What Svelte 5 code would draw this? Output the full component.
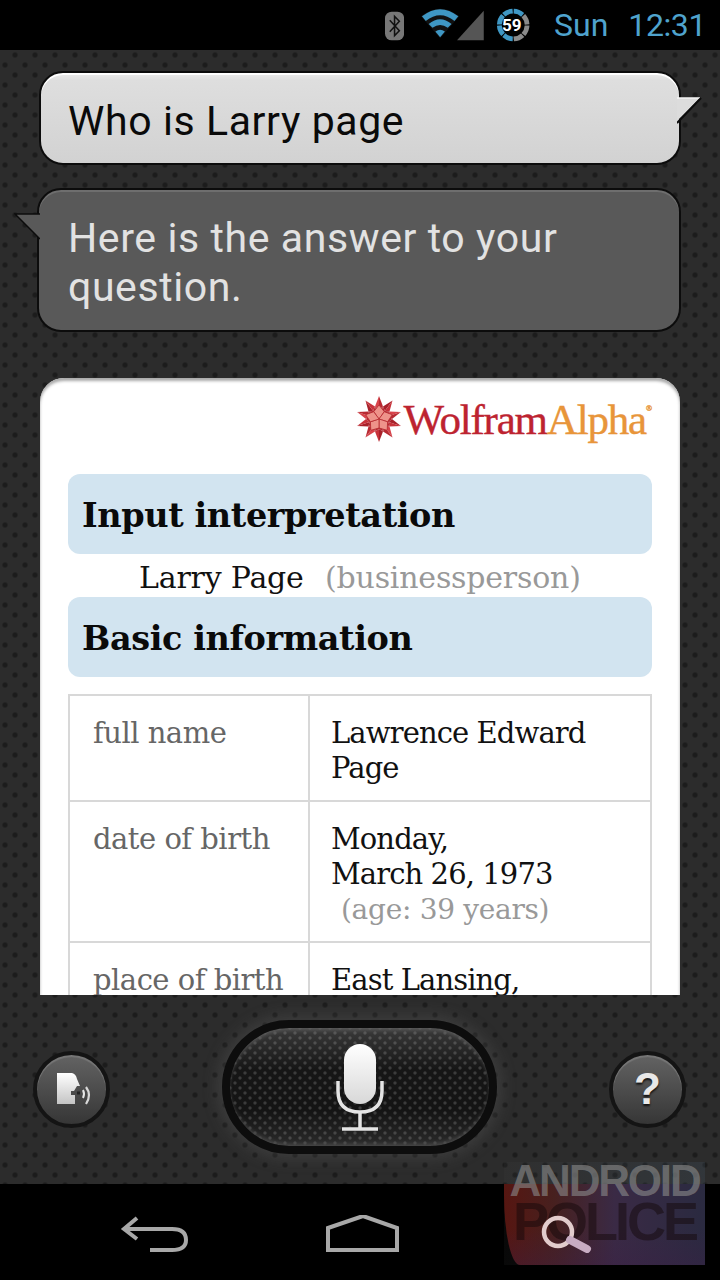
<script>
  const rows = [
    { label: "full name", lines: ["Lawrence Edward", "Page"] },
    { label: "date of birth", lines: ["Monday,", "March 26, 1973"], note: "(age: 39 years)" },
    { label: "place of birth", lines: ["East Lansing,", "Michigan"] },
  ];
  const segs = [0, 45, 90, 135, 180, 225, 270, 315];

  // wolfram star: ten spikes round a pale centre
  const cx = 23;
  const cy = 23;
  const pt = (r, i) => {
    const a = ((i * 36 - 90) * Math.PI) / 180;
    return `${(cx + r * Math.cos(a)).toFixed(1)},${(cy + r * Math.sin(a)).toFixed(1)}`;
  };
  const spikes = Array.from({ length: 10 }, (_, i) => ({
    left: `${pt(13, i - 0.5)} ${pt(23, i)} ${pt(10, i)}`,
    right: `${pt(13, i + 0.5)} ${pt(23, i)} ${pt(10, i)}`,
    base: `${pt(13, i - 0.5)} ${pt(10, i)} ${pt(13, i + 0.5)} ${pt(4, i + 0.5)} ${pt(4, i - 0.5)}`,
    i,
  }));
  const kites = [0, 2, 4, 6, 8].map((i) => `${pt(0, i)} ${pt(9, i - 1)} ${pt(14, i)} ${pt(9, i + 1)}`);
</script>

<div class="screen">
  <header class="status">
    <svg class="bt" width="20" height="30" viewBox="0 0 20 30">
      <rect x="0" y="0" width="20" height="30" rx="7" fill="#777" />
      <path d="M5 9 L15 20 L10 25 V5 L15 10 L5 21" fill="none" stroke="#111" stroke-width="1.6" />
    </svg>
    <svg class="wifi" width="40" height="32" viewBox="0 0 40 32">
      <path d="M0 9 Q20 -7 40 9 L20 32 Z" fill="#111" />
      <path d="M1 9 Q20 -6 39 9 L35 14 Q20 2 5 14 Z" fill="#3f97c4" />
      <path d="M8 17 Q20 7 32 17 L28 21 Q20 15 12 21 Z" fill="#3f97c4" />
      <path d="M15 25 Q20 21 25 25 L20 31 Z" fill="#3f97c4" />
    </svg>
    <svg class="signal" width="28" height="31" viewBox="0 0 28 31">
      <path d="M28 0 V31 H0 Z" fill="#555" />
    </svg>
    <svg class="batt" width="36" height="36" viewBox="0 0 36 36">
      {#each segs as a, i}
        <path
          d="M18 1 A17 17 0 0 1 29 5 L26 9 A12 12 0 0 0 18 6 Z"
          fill={i === 1 || i === 2 || i === 3 ? "#8a8a8a" : "#3f97c4"}
          transform="rotate({a + 2} 18 18)"
        />
      {/each}
    </svg>
    <span class="batt-num">59</span>
    <span class="clock">Sun</span>
    <span class="clock time">12:31</span>
  </header>

  <main class="main">
    <div class="convo">
      <div class="bubble me">
        <svg class="tail tail-r" width="26" height="30" viewBox="0 0 26 30">
          <path d="M0 2 H23 L0 25 Z" fill="#dcdcdc" />
          <path d="M0 2 H23" stroke="#f4f4f4" stroke-width="1.5" />
          <path d="M0 27 L24 2" stroke="#0c0c0c" stroke-width="2" />
        </svg>
        Who is Larry page
      </div>
      <div class="bubble bot">
        <svg class="tail tail-l" width="26" height="30" viewBox="0 0 26 30">
          <path d="M26 1 H1 L26 26 Z" fill="#595959" />
          <path d="M26 1 H1 L26 26" fill="none" stroke="#0c0c0c" stroke-width="1.5" />
        </svg>
        Here is the answer to your question.
      </div>

      <section class="card">
        <div class="logo">
          <svg width="46" height="46" viewBox="0 0 46 46">
            {#each spikes as s}
              <polygon points={s.left} fill={s.i % 2 ? "#a8212a" : "#d8434a"} />
              <polygon points={s.right} fill={s.i % 2 ? "#c8323a" : "#b82a32"} />
              <polygon points={s.base} fill="#b5282f" />
            {/each}
            {#each kites as k}
              <polygon points={k} fill="#ee938a" stroke="#b5282f" stroke-width="0.8" />
            {/each}
          </svg>
          <span class="wolf">Wolfram</span><span class="alpha">Alpha</span><sup class="reg">®</sup>
        </div>

        <h2 class="pod">Input interpretation</h2>
        <p class="interp">Larry Page <span class="grey">(businessperson)</span></p>
        <h2 class="pod">Basic information</h2>

        <div class="table">
          {#each rows as row}
            <div class="cell key">{row.label}</div>
            <div class="cell val">
              {#each row.lines as line}
                <div>{line}</div>
              {/each}
              {#if row.note}
                <div class="note">{row.note}</div>
              {/if}
            </div>
          {/each}
        </div>
      </section>
    </div>

    <div class="controls">
      <button class="round" aria-label="speak">
        <svg width="44" height="36" viewBox="0 0 44 36">
          <defs>
            <linearGradient id="head" x1="0" y1="0" x2="0" y2="1">
              <stop offset="0" stop-color="#fff" />
              <stop offset="1" stop-color="#c4c4c4" />
            </linearGradient>
          </defs>
          <path d="M7 2 H22 Q26 3 27 8 L30 15 H27 L24 20 H21 V24 H25 V33 H7 Z" fill="url(#head)" />
          <path d="M30 22 H27" stroke="#222" stroke-width="3" />
          <path d="M33 19 Q35 23 33 27" fill="none" stroke="#e8e8e8" stroke-width="2" />
          <path d="M36 16 Q42 24 36 33" fill="none" stroke="#d8d8d8" stroke-width="2.2" />
        </svg>
      </button>

      <button class="pill" aria-label="microphone">
        <svg width="52" height="88" viewBox="0 0 52 88">
          <defs>
            <linearGradient id="micg" x1="0" y1="0" x2="0" y2="1">
              <stop offset="0" stop-color="#fff" />
              <stop offset="1" stop-color="#d8d8d8" />
            </linearGradient>
          </defs>
          <rect x="10" y="1" width="32" height="60" rx="16" fill="url(#micg)" />
          <path d="M4 38 V48 Q4 69 26 69 Q48 69 48 48 V38" fill="none" stroke="#e4e4e4" stroke-width="3.5" />
          <path d="M26 69 V85 M8 86 H44" fill="none" stroke="#e4e4e4" stroke-width="3.5" />
        </svg>
      </button>

      <button class="round help">?</button>
    </div>
  </main>

  <nav class="nav">
    <svg width="70" height="38" viewBox="0 0 70 38">
      <path d="M17 3 L4 14 L17 24 M4 14 H52 Q66 14 66 25 Q66 35 52 35 H30" fill="none" stroke="#a8a8a8" stroke-width="4" />
    </svg>
    <svg width="74" height="38" viewBox="0 0 74 38">
      <path d="M2 13 L37 1 L71 13 V35 H2 Z" fill="none" stroke="#a8a8a8" stroke-width="4" />
    </svg>
    <svg width="54" height="38" viewBox="0 0 54 38">
      <circle cx="17" cy="17" r="14" fill="none" stroke="#e2cccc" stroke-width="4.5" />
      <path d="M29 25 L46 34" stroke="#c8acc2" stroke-width="8" stroke-linecap="round" />
    </svg>
  </nav>

  <div class="mark" aria-hidden="true">
    <span>ANDROID</span>
    <span>POLICE</span>
  </div>
</div>

<style>
  :global(body) {
    margin: 0;
    background: #000;
  }

  .screen {
    position: relative;
    width: 720px;
    height: 1280px;
    display: flex;
    flex-direction: column;
    overflow: hidden;
    font-family: Roboto, sans-serif;
  }

  .status {
    flex: 0 0 50px;
    background: #000;
    display: flex;
    align-items: center;
    padding: 0 14px 0 385px;
    box-sizing: border-box;
    color: #4fa3cd;
  }

  .bt {
    margin: 1px 0 0;
  }

  .wifi {
    margin: -4px 0 0 17px;
  }

  .signal {
    margin: 0 0 0 -2px;
  }

  .batt {
    margin: 0 0 0 12px;
  }

  .batt-num {
    width: 36px;
    margin-left: -36px;
    text-align: center;
    color: #fff;
    font-size: 17px;
    font-weight: 700;
  }

  .clock {
    font-size: 32px;
    margin-left: 25px;
    line-height: 50px;
  }

  .clock.time {
    margin-left: 20px;
    letter-spacing: -0.4px;
  }

  .main {
    flex: 1;
    display: flex;
    flex-direction: column;
    background-color: #2c2c2c;
    background-image:
      radial-gradient(circle at center, #1c1c1c 0, #1c1c1c 1.8px, transparent 3.4px),
      radial-gradient(circle at center, #1c1c1c 0, #1c1c1c 1.8px, transparent 3.4px);
    background-size: 20px 20px;
    background-position: -5px 5px, 5px -5px;
  }

  .convo {
    height: 945px;
    overflow: hidden;
    box-sizing: border-box;
    padding: 21px 39px 0 39px;
  }

  .bubble {
    position: relative;
    border: 2px solid #0c0c0c;
    border-radius: 24px;
    box-sizing: border-box;
    font-size: 41px;
    letter-spacing: 0.6px;
    line-height: 49px;
    padding: 0 27px;
  }

  .me {
    height: 94px;
    padding-top: 24px;
    background: linear-gradient(#ececec 0, #dedede 8%, #d2d2d2 100%);
    box-shadow: inset 0 2px 0 #fff;
    color: #0a0a0a;
  }

  .bot {
    margin: 23px 0 0 -2px;
    height: 144px;
    padding: 24px 60px 0 29px;
    background: #595959;
    box-shadow: inset 0 2px 0 #6e6e6e;
    color: #e2e2e2;
  }

  .tail {
    position: absolute;
  }

  .tail-r {
    right: -24px;
    top: 23px;
  }

  .tail-l {
    left: -25px;
    top: 23px;
  }

  .card {
    margin: 46px 0 0 1px;
    width: 640px;
    height: 640px;
    box-sizing: border-box;
    background: #fff;
    border-radius: 24px 24px 0 0;
    box-shadow: inset 0 3px 3px #aaa;
    padding: 16px 28px 0 28px;
    font-family: "DejaVu Serif", serif;
  }

  .logo {
    height: 80px;
    box-sizing: border-box;
    display: flex;
    align-items: flex-start;
    justify-content: flex-end;
    font-family: "Liberation Serif", serif;
    font-size: 43px;
    line-height: 52px;
    letter-spacing: -1.2px;
    -webkit-text-stroke: 0.4px currentColor;
  }

  .logo svg {
    margin: 2px 1px 0 0;
  }

  .wolf {
    color: #bd2330;
  }

  .alpha {
    color: #e8953a;
  }

  .reg {
    color: #e8953a;
    font-size: 8px;
    line-height: 30px;
    letter-spacing: 0;
  }

  .pod {
    margin: 0;
    height: 80px;
    background: #d2e4f0;
    border-radius: 12px;
    padding-left: 14px;
    font-size: 33.5px;
    font-weight: 700;
    line-height: 84px;
    color: #0a0a0a;
    letter-spacing: -0.4px;
  }

  .interp {
    margin: 0;
    height: 43px;
    line-height: 47px;
    padding-left: 71px;
    font-size: 30px;
    letter-spacing: -0.2px;
    color: #111;
  }

  .grey {
    margin-left: 12px;
    color: #999;
  }

  .table {
    margin-top: 17px;
    display: grid;
    grid-template-columns: 240px 342px;
    border-top: 2px solid #d8d8d8;
    border-left: 2px solid #d8d8d8;
    font-size: 29px;
    line-height: 35px;
    letter-spacing: -0.5px;
    box-sizing: border-box;
    width: 584px;
  }

  .cell {
    border-right: 2px solid #d8d8d8;
    border-bottom: 2px solid #d8d8d8;
    padding: 20px 10px 14px 23px;
    box-sizing: border-box;
  }

  .key {
    color: #666;
  }

  .val {
    color: #111;
    padding-left: 21px;
    letter-spacing: -0.9px;
  }

  .note {
    color: #999;
    padding-left: 10px;
    font-size: 28px;
    letter-spacing: -0.3px;
  }

  .controls {
    flex: 1;
    position: relative;
    display: flex;
    align-items: center;
    justify-content: space-between;
    padding: 0 34px 0 33px;
    box-sizing: border-box;
  }

  button {
    padding: 0;
    display: flex;
    align-items: center;
    justify-content: center;
    cursor: pointer;
  }

  .round {
    width: 77px;
    height: 77px;
    border-radius: 50%;
    border: 4px solid #141414;
    box-sizing: border-box;
    background: linear-gradient(#636363, #363636);
    box-shadow: inset 0 2px 1px #777;
    margin-top: -1px;
  }

  .help {
    color: #e8e8e8;
    font-family: "Liberation Sans", sans-serif;
    font-size: 44px;
    font-weight: 700;
    text-shadow: 0 2px 2px #111;
  }

  .pill {
    width: 275px;
    height: 134px;
    border-radius: 67px;
    border: 8px solid #0d0d0d;
    box-sizing: border-box;
    background-color: #1a1a1a;
    background-image:
      radial-gradient(circle at center, rgba(255, 255, 255, 0.2) 0, rgba(255, 255, 255, 0.14) 1.2px, transparent 2.2px),
      radial-gradient(circle at center, rgba(255, 255, 255, 0.2) 0, rgba(255, 255, 255, 0.14) 1.2px, transparent 2.2px),
      linear-gradient(#3a3a3a, #161616 35%, #141414 70%, #2a2a2a);
    background-size: 10px 10px, 10px 10px, 100% 100%;
    background-position: 0 0, 5px 5px, 0 0;
    box-shadow:
      0 0 16px 4px rgba(110, 110, 110, 0.28),
      inset 0 4px 4px -2px #5c5c5c,
      inset 0 -4px 4px -2px #4a4a4a;
    margin-bottom: 5px;
  }

  .nav {
    flex: 0 0 96px;
    background: #000;
    display: flex;
    align-items: flex-start;
    padding: 31px 0 0 120px;
    box-sizing: border-box;
    gap: 136px;
  }

  .nav svg:last-child {
    position: relative;
    z-index: 2;
    margin-left: 5px;
  }

  .mark {
    position: absolute;
    left: 504px;
    top: 1162px;
    width: 201px;
    height: 103px;
    display: flex;
    flex-direction: column;
    align-items: center;
    font-family: "Liberation Sans", sans-serif;
    font-weight: 700;
    z-index: 1;
    background: linear-gradient(90deg, rgba(70, 70, 70, 0.12), rgba(70, 90, 110, 0.22));
  }

  .mark::before {
    content: "";
    position: absolute;
    inset: 22px 0 0 0;
    background:
      linear-gradient(rgba(0, 0, 0, 0) 55%, rgba(60, 30, 70, 0.35)),
      linear-gradient(90deg, #561611 0, #47201f 25%, #3a2a45 55%, #2a2a40 100%);
    border-bottom-left-radius: 16px 70px;
  }

  .mark span {
    position: relative;
    font-size: 44px;
    height: 37px;
    line-height: 38px;
    letter-spacing: -2.2px;
    color: rgba(140, 140, 140, 0.62);
  }

  .mark span:last-child {
    font-size: 54px;
    height: 44px;
    line-height: 44px;
    letter-spacing: -3px;
    color: rgba(20, 8, 10, 0.5);
  }
</style>
